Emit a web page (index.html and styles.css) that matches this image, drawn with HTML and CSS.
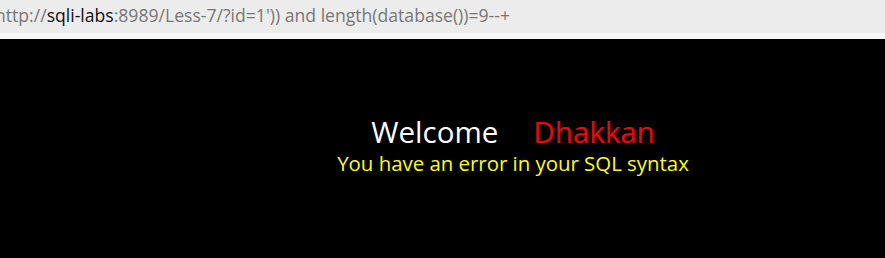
FILE: index.html
```html
<!DOCTYPE html>
<html lang="en">
<head>
  <meta charset="UTF-8">
  <title>Less-7 Dump into Outfile</title>
  <link rel="stylesheet" href="styles.css">
</head>
<body>
  <!-- 地址栏 -->
  <div class="address-bar">
    <div class="url">http://<span class="host">sqli-labs</span>:8989/Less-7/?id=1')) and length(database())=9--+</div>
  </div>
  <div class="address-edge"></div>

  <!-- 页面内容 -->
  <div class="page">
    <div class="welcome">
      Welcome<span class="gap"></span><span class="name">Dhakkan</span>
    </div>
    <div class="error">You have an error in your SQL syntax</div>
  </div>
</body>
</html>
```

FILE: styles.css
```css
* {
  box-sizing: border-box;
  margin: 0;
  padding: 0;
}

body {
  font-family: 'Open Sans', 'Noto Sans', sans-serif;
  background-color: #000;
  width: 885px;
  height: 258px;
  overflow: hidden;
}

/* 地址栏 */
.address-bar {
  height: 33px;
  background-color: #ececec;
  overflow: hidden;
}

.url {
  margin-left: -5px;
  padding-top: 3px;
  font-size: 17.6px;
  line-height: 24px;
  color: #777;
  white-space: nowrap;
}

.url .host {
  color: #111;
}

.address-edge {
  height: 6px;
  background-color: #f7f7f7;
}

/* 内容区 */
.page {
  padding-left: 141px;
  padding-top: 75px;
  text-align: center;
}

.welcome {
  font-size: 29.5px;
  line-height: 36px;
  color: #fff;
}

.welcome .gap {
  display: inline-block;
  width: 35px;
}

.welcome .name {
  color: #f00;
}

.error {
  font-size: 20.4px;
  line-height: 26px;
  color: #ff0;
}
```
